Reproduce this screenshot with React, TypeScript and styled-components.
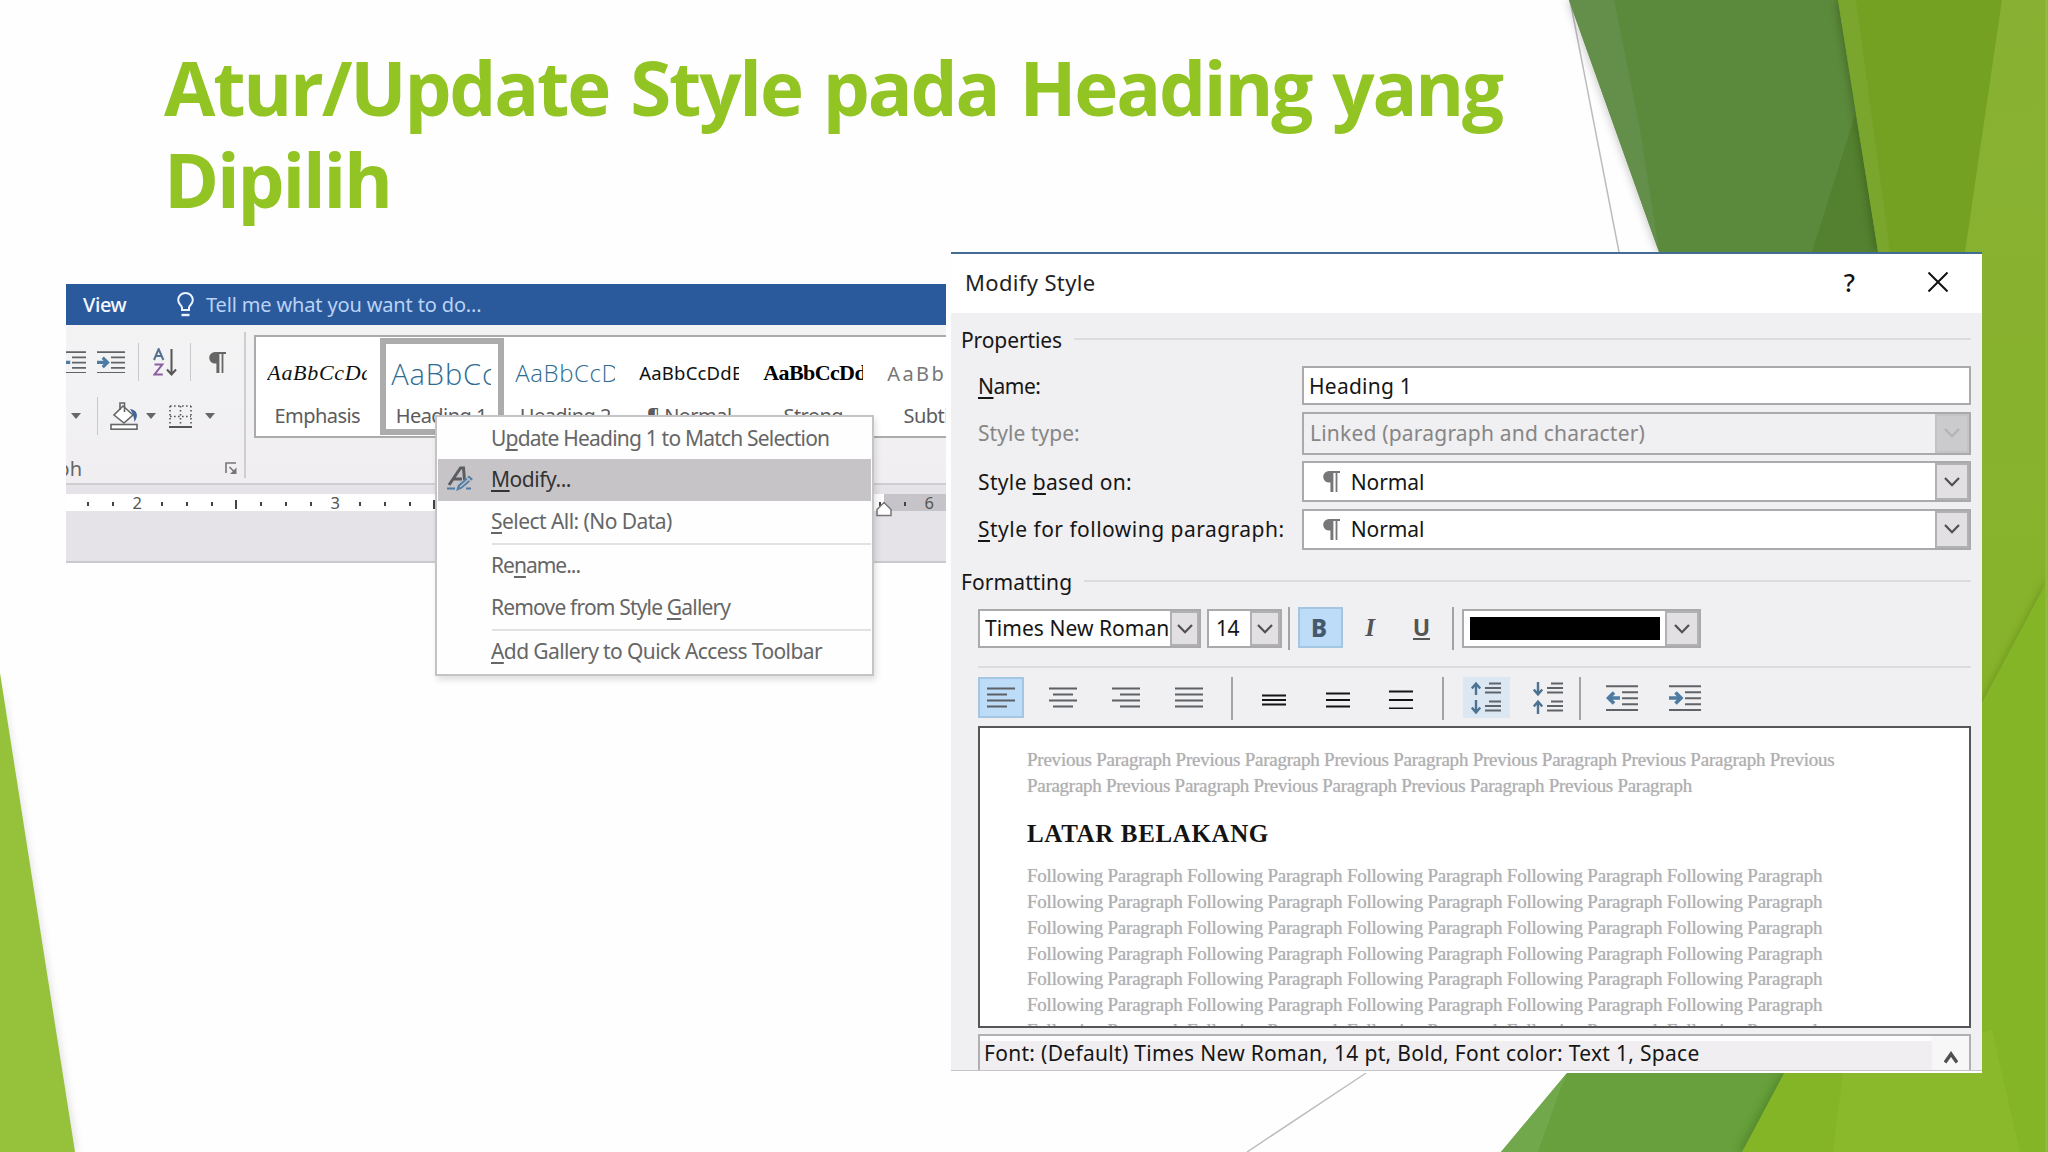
import React from "react";
import styled, { createGlobalStyle, css } from "styled-components";

const sans = `"Noto Sans", "Open Sans", sans-serif`;
const serif = `"Liberation Serif", "Times New Roman", serif`;

const GlobalStyle = createGlobalStyle`
  *, *::before, *::after { box-sizing: border-box; }
  body { margin: 0; background: #fefefe; font-family: ${sans}; }
  svg { display: block; flex: none; }
  u { text-decoration-thickness: 2px; text-underline-offset: 3px; text-decoration-skip-ink: none; }
`;

/* ---------- slide ---------- */

const Slide = styled.main`
  position: relative;
  width: 2048px;
  height: 1152px;
  overflow: hidden;
  display: flex;
  flex-direction: column;
`;

const Backdrop = styled.svg`
  position: absolute;
  inset: 0;
`;

const SlideTitle = styled.h1`
  position: relative;
  margin: 0;
  height: 252px;
  padding: 41px 0 0 164px;
  width: 1560px;
  font: 700 74.5px/92px "Open Sans", sans-serif;
  letter-spacing: -2.2px;
  word-spacing: 4px;
  color: #92c424;
`;

const Figures = styled.div`
  position: relative;
  display: flex;
  align-items: flex-start;
  padding-left: 66px;
  gap: 5px;
`;

const Text = styled.span<{ $ls?: number }>`
  letter-spacing: ${(p) => p.$ls ?? 0}px;
  white-space: pre;
`;

/* ---------- ribbon ---------- */

const WordWindow = styled.section`
  position: relative;
  width: 880px;
  height: 279px;
  margin-top: 32px;
  display: flex;
  flex-direction: column;
  background: #e5e3e7;
  border-bottom: 2px solid #cbc9cc;
`;

const TabBar = styled.div`
  height: 41px;
  flex: none;
  display: flex;
  align-items: center;
  padding: 0 0 1px 17px;
  background: #2a5a9c;
  color: #b9d3f5;
  font-size: 20px;
`;

const ActiveTab = styled.span`
  width: 94px;
  color: #f4f9ff;
  font-weight: 500;
  letter-spacing: -0.4px;
`;

const TellMe = styled.span`
  margin-left: 12px;
  letter-spacing: -0.15px;
`;

const Ribbon = styled.div`
  height: 160px;
  flex: none;
  display: flex;
  overflow: hidden;
  background: linear-gradient(#f3f3f4, #f0eef1);
  border-bottom: 2px solid #cfcdd0;
`;

const ParagraphGroup = styled.div`
  width: 180px;
  height: 146px;
  margin-top: 7px;
  display: flex;
  flex-direction: column;
  border-right: 2px solid #cfcdd1;
`;

const IconRow = styled.div<{ $top: number }>`
  height: 38px;
  margin-top: ${(p) => p.$top}px;
  display: flex;
  align-items: center;
`;

const Slot = styled.span<{ $ml: number }>`
  margin-left: ${(p) => p.$ml}px;
  display: flex;
`;

const GroupDivider = styled.span<{ $ml: number }>`
  width: 1px;
  height: 38px;
  margin-left: ${(p) => p.$ml}px;
  background: #c9c8cb;
`;

const GroupFooter = styled.div`
  display: flex;
  align-items: center;
  justify-content: space-between;
  height: 28px;
  margin-top: 23px;
  padding-right: 7px;
  overflow: hidden;
  color: #666;
  font-size: 20px;
`;

const GroupName = styled.span`
  width: 16px;
  display: flex;
  justify-content: flex-end;
  overflow: hidden;
`;

const Gallery = styled.div`
  flex: 1;
  min-width: 0;
  height: 103px;
  margin: 10px 0 0 8px;
  display: flex;
  overflow: hidden;
  background: #fff;
  border: 2px solid #ababab;
  border-right: 0;
`;

const StyleCell = styled.div<{ $selected?: boolean }>`
  width: 124px;
  height: 97px;
  margin-top: 1px;
  flex: none;
  padding: 12px 1.5px 0 0;
  display: flex;
  flex-direction: column;
  align-items: center;
  gap: 8px;
  ${(p) => p.$selected && css`box-shadow: inset 0 0 0 6px #acacac;`}
`;

type Face = "emphasis" | "heading1" | "heading2" | "normal" | "strong" | "subtitle";

const faces = {
  emphasis: css`font: italic 400 22px/45px ${serif}; letter-spacing: 0.7px; color: #111;`,
  heading1: css`font: 300 29px/47px "Open Sans", sans-serif; letter-spacing: 0.9px; color: #2f6c92;`,
  heading2: css`font: 300 24px/45px "Open Sans", sans-serif; letter-spacing: 0.6px; color: #2f6c92;`,
  normal: css`font: 400 18.5px/45px ${sans}; letter-spacing: 0.2px; color: #111;`,
  strong: css`font: 700 22px/45px ${serif}; letter-spacing: -0.6px; color: #000;`,
  subtitle: css`font: 400 20px/47px ${sans}; letter-spacing: 2.4px; color: #777;`,
};

const Preview = styled.div<{ $face: Face }>`
  width: 100px;
  height: 44px;
  overflow: hidden;
  white-space: nowrap;
  ${(p) => faces[p.$face]}
`;

const StyleName = styled.div`
  height: 28px;
  font-size: 20px;
  line-height: 28px;
  letter-spacing: -0.55px;
  color: #5c5c5c;
  white-space: nowrap;
`;

const Ruler = styled.div`
  height: 17px;
  flex: none;
  margin-top: 9px;
  display: flex;
  padding-left: 9.4px;
  overflow: hidden;
  background: linear-gradient(90deg, #fff 0 818px, #c6c4c8 818px);
`;

const RulerCell = styled.span`
  width: 24.75px;
  flex: none;
  display: flex;
  align-items: center;
  justify-content: center;
  font-size: 16.5px;
  line-height: 17px;
  color: #555;
`;

const Tick = styled.i<{ $tall?: boolean }>`
  width: 2px;
  height: ${(p) => (p.$tall ? 9 : 4)}px;
  margin-top: ${(p) => (p.$tall ? 3 : 2)}px;
  background: #444;
`;

const IndentMarker = styled.svg`
  position: absolute;
  left: 810px;
  top: 217px;
`;

/* ---------- context menu ---------- */

const Menu = styled.div`
  position: absolute;
  left: 369px;
  top: 131px;
  width: 439px;
  height: 261px;
  padding: 1px;
  background: #fefefe;
  border: 2px solid #c4c4c6;
  box-shadow: 2px 4px 6px rgba(0, 0, 0, 0.12);
`;

const MenuItem = styled.div<{ $active?: boolean }>`
  height: 41.3px;
  display: flex;
  align-items: center;
  padding-bottom: 1px;
  font-size: 21px;
  color: ${(p) => (p.$active ? "#333" : "#666")};
  background: ${(p) => (p.$active ? "#c6c4c7" : "transparent")};
`;

const MenuIcon = styled.span`
  width: 53px;
  padding-left: 9px;
  flex: none;
`;

const MenuRule = styled.div`
  height: 2px;
  margin: 0.7px 0 0.7px 54px;
  background: #e2e2e2;
`;

/* ---------- dialog ---------- */

const DialogBox = styled.section`
  width: 1031px;
  height: 821px;
  display: flex;
  flex-direction: column;
  background: #f0eff1;
  border-top: 2px solid #426c93;
  border-bottom: 2px solid #fff;
`;

const DialogTitle = styled.header`
  height: 59px;
  flex: none;
  display: flex;
  align-items: center;
  padding: 0 34px 4px 14px;
  background: #fff;
  color: #222;
  font-size: 22px;
`;

const HelpMark = styled.span`
  margin-left: auto;
  margin-right: 73px;
  font-size: 25px;
  font-weight: 500;
  color: #111;
`;

const DialogBody = styled.div`
  flex: 1;
  padding: 12px 11px 0 27px;
  display: flex;
  flex-direction: column;
  border-bottom: 1px solid #c4c4c6;
`;

const SectionHead = styled.div<{ $top?: number }>`
  display: flex;
  align-items: center;
  gap: 12px;
  height: 29px;
  flex: none;
  margin: ${(p) => p.$top ?? 0}px 0 0 -17px;
  font-size: 21px;
  color: #161616;

  &::after {
    content: "";
    flex: 1;
    height: 2px;
    margin-bottom: 1px;
    background: #dcdbdd;
  }
`;

const Fields = styled.div`
  margin-top: 12px;
  display: grid;
  grid-template-columns: 324px 1fr;
  grid-template-rows: 39px 43px 41px 41px;
  row-gap: 6.5px;
  align-items: center;
  font-size: 21px;
`;

const Label = styled.label<{ $muted?: boolean }>`
  color: ${(p) => (p.$muted ? "#868686" : "#161616")};
  white-space: pre;
`;

const Field = styled.div<{ $muted?: boolean; $pad?: number; $width?: number }>`
  width: ${(p) => (p.$width ? `${p.$width}px` : "100%")};
  height: 100%;
  display: flex;
  align-items: center;
  padding-left: ${(p) => p.$pad ?? 5}px;
  border: 2px solid #aaa9ac;
  background: ${(p) => (p.$muted ? "#f0eff1" : "#fff")};
  color: ${(p) => (p.$muted ? "#868686" : "#161616")};
  white-space: nowrap;
  overflow: hidden;
`;

const DropButton = styled.span<{ $muted?: boolean; $wide?: number }>`
  width: ${(p) => p.$wide ?? 34}px;
  flex: none;
  align-self: stretch;
  margin-left: auto;
  display: flex;
  align-items: center;
  justify-content: center;
  background: ${(p) => (p.$muted ? "#cbcacc" : "#e2e0e3")};
  border: 2px solid ${(p) => (p.$muted ? "#c3c2c4" : "#b1b0b3")};
`;

const Bar = styled.div<{ $top: number }>`
  height: 43px;
  flex: none;
  margin-top: ${(p) => p.$top}px;
  display: flex;
  font-size: 21px;
`;

const Combo = styled.div<{ $ml?: number; $w: number }>`
  width: ${(p) => p.$w}px;
  height: 39px;
  margin: 2px 0 0 ${(p) => p.$ml ?? 0}px;
  line-height: 28px;

  ${Text} { margin-bottom: 2px; }
`;

const Divider = styled.span<{ $ml: number }>`
  width: 2px;
  height: 43px;
  margin-left: ${(p) => p.$ml}px;
  background: #a3a2a5;
`;

const ToolButton = styled.span<{ $ml?: number; $tone?: "on" | "hover"; $w?: number }>`
  width: ${(p) => p.$w ?? 46}px;
  height: 41px;
  margin-left: ${(p) => p.$ml ?? 0}px;
  display: flex;
  align-items: center;
  justify-content: center;
  color: #555;
  ${(p) => p.$tone === "on" && css`background: #bddcf7; border: 2px solid #a3c6e2;`}
  ${(p) => p.$tone === "hover" && css`background: #dbe8f4;`}
`;

const Glyph = styled.span<{ $kind: "b" | "i" | "u" }>`
  line-height: 28px;
  ${(p) => p.$kind === "b" && css`font: 800 24px/28px ${sans}; color: #45586c; margin-right: 3px;`}
  ${(p) => p.$kind === "i" && css`font: italic 700 25px/28px ${serif}; margin-right: 1px;`}
  ${(p) => p.$kind === "u" && css`font: 700 23px/22px ${sans}; border-bottom: 2px solid #555; margin: 1px 2px 0 0;`}
`;

const Swatch = styled.span`
  width: 190px;
  height: 23px;
  background: #000;
`;

const Rule = styled.div`
  height: 2px;
  flex: none;
  margin-top: 16px;
  background: #dcdbdd;
`;

const PreviewPane = styled.div`
  height: 302px;
  flex: none;
  margin-top: 6px;
  padding: 19px 0 0 47px;
  overflow: hidden;
  background: #fff;
  border: 2px solid #555659;
  font: 400 19px/25.7px ${serif};
  color: #b0afb1;
  white-space: pre;
`;

const SampleLine = styled.div<{ $ls?: number }>`
  letter-spacing: ${(p) => p.$ls ?? -0.235}px;
  text-shadow: 0 0 1px #c8c7c9;
`;

const SampleHeading = styled.div`
  height: 47px;
  margin: 13px 0 5px;
  font-size: 25px;
  font-weight: 700;
  line-height: 45px;
  letter-spacing: 0.63px;
  color: #141414;
`;

const Description = styled.div`
  flex: 1;
  margin-top: 6px;
  display: flex;
  align-items: center;
  padding-left: 4px;
  border: 2px solid #b0afb2;
  border-bottom: 0;
  background: linear-gradient(#fcfcfc 0 5px, #f0eef0 5px);
  font-size: 21px;
  color: #161616;
`;

const ScrollUp = styled.span`
  width: 37px;
  align-self: stretch;
  margin-left: auto;
  display: flex;
  align-items: center;
  justify-content: center;
  padding-top: 8px;
  background: #f8f7f8;
`;

/* ---------- icons ---------- */

const IndentIcon = ({ dir, w = 32 }: { dir: "left" | "right"; w?: number }) => (
  <svg width={w} height={(w * 26) / 32} viewBox="0 0 32 26" fill="none" stroke="#606468" strokeWidth="2">
    <path d="M0 1.300H32M16 7.300H32M16 13.300H32M16 19.300H32M0 25H32" />
    <path
      d={dir === "left" ? "M14 13H3M8 7.500L2.500 13L8 18.500" : "M0 13H11M6.500 7.500L12 13L6.500 18.500"}
      stroke="#4d7ba3"
      strokeWidth="3.600"
    />
  </svg>
);

const Caret = () => (
  <svg width="10" height="6" viewBox="0 0 10 6"><path d="M0 0H10L5 6Z" fill="#666" /></svg>
);

const Pilcrow = ({ w = 17, h = 21, color = "#77777a" }: { w?: number; h?: number; color?: string }) => (
  <svg width={w} height={h} viewBox="0 0 17 21">
    <path d="M17 0H6A5.700 5.700 0 0 0 6 11.600H7.400V21H10.400V2H12.600V21H14.400V2H17Z" fill={color} />
  </svg>
);

const SortIcon = () => (
  <svg width="24" height="29" viewBox="0 0 24 29" fill="none" strokeWidth="2">
    <path d="M1 12L5.600 1L10.400 12M2.800 8H8.600" stroke="#56708f" />
    <path d="M1.500 16.500H9.300L1.500 26.500H9.800" stroke="#8a5fa0" />
    <path d="M18.500 1V26M14 21.500L18.500 26.500L23 21.500" stroke="#555" />
  </svg>
);

const BucketIcon = () => (
  <svg width="28" height="28" viewBox="0 0 28 28" fill="none" stroke="#666" strokeWidth="1.600">
    <path d="M13 4L23 13L14 21L4 13Z" fill="#fff" />
    <path d="M10 8V1H14.500V10" />
    <path d="M20 7C27 8 29 13 24.500 20C24 15 23 11 20 7Z" fill="#41649b" stroke="none" />
    <rect x="1" y="22.500" width="26" height="4.700" fill="#fff" />
  </svg>
);

const BordersIcon = () => (
  <svg width="23" height="23" viewBox="0 0 23 23" fill="none" stroke="#555" strokeWidth="1.600">
    <path d="M1 1H22M1 11.500H22M1 1V20M11.500 1V20M22 1V20" strokeDasharray="1.600 2.400" />
    <path d="M0 22H23" strokeWidth="2" />
  </svg>
);

const LauncherIcon = () => (
  <svg width="12" height="13" viewBox="0 0 12 13" fill="none" stroke="#777" strokeWidth="1.600">
    <path d="M1 11V1H11M4.500 5L10 10.500" />
    <path d="M11.500 5.500V12H5Z" fill="#777" stroke="none" />
  </svg>
);

const BulbIcon = () => (
  <svg width="17" height="25" viewBox="0 0 17 25" fill="none" stroke="#eaf3ff" strokeWidth="2">
    <path d="M5 18V15.500C4 13 1.200 11.500 1.200 8A7.300 7 0 0 1 15.800 8C15.800 11.500 13 13 12 15.500V18Z" />
    <path d="M4.500 23H12.500" strokeWidth="2.400" />
  </svg>
);

const ModifyIcon = () => (
  <svg width="27" height="26" viewBox="0 0 27 26" fill="none">
    <path d="M2 19L13.500 2H16.500L17.500 14M7 13H15" stroke="#5b5d61" strokeWidth="3" />
    <path d="M0 22.500H8M19 22.500H24" stroke="#4f7ba5" strokeWidth="1.800" />
    <path d="M9 25L11 19L22 9.500L26 13L15 22.500Z" fill="#5480a8" />
    <path d="M13 21L22.500 12.500M19 11L24 15.500" stroke="#c6c4c7" strokeWidth="1.200" />
  </svg>
);

const Chevron = ({ color = "#505053" }: { color?: string }) => (
  <svg width="16" height="10" viewBox="0 0 16 10" fill="none" stroke={color} strokeWidth="2.200">
    <path d="M1 1L8 8.200L15 1" />
  </svg>
);

const CloseIcon = () => (
  <svg width="20" height="20" viewBox="0 0 20 20" stroke="#111" strokeWidth="2">
    <path d="M0.500 0.500L19.500 19.500M19.500 0.500L0.500 19.500" />
  </svg>
);

const alignShapes = {
  left: "M0 1.500H28M0 7.500H20M0 13.500H28M0 19.500H20",
  center: "M0 1.500H28M4 7.500H24M0 13.500H28M4 19.500H24",
  right: "M0 1.500H28M8 7.500H28M0 13.500H28M8 19.500H28",
  justify: "M0 1.500H28M0 7.500H28M0 13.500H28M0 19.500H28",
};

const AlignIcon = ({ kind }: { kind: keyof typeof alignShapes }) => (
  <svg width="28" height="21" viewBox="0 0 28 21" stroke="#5d6165" strokeWidth="2"><path d={alignShapes[kind]} /></svg>
);

const LineSpacingIcon = ({ gap }: { gap: number }) => (
  <svg width="24" height="22" viewBox="0 0 24 22" stroke="#151515" strokeWidth="2.200">
    <path d={`M0 ${13 - gap}H24M0 13H24M0 ${13 + gap}H24`} />
  </svg>
);

const SpaceIcon = ({ expand }: { expand?: boolean }) => (
  <svg width="31" height="33" viewBox="0 0 31 33" fill="none" stroke="#606468" strokeWidth="2">
    <path d="M18 2.500H30M14 7H30M14 11.500H30M18 20.500H30M14 25H30M14 29.500H30" />
    <g stroke="#4d7391" strokeWidth="2.400">
      {expand ? (
        <path d="M5 14V3M0.800 7.500L5 2.500L9.200 7.500M5 19V31M0.800 26.500L5 31.500L9.200 26.500" />
      ) : (
        <path d="M5 1V13M0.800 8.500L5 13.500L9.200 8.500M5 33V21M0.800 25.500L5 20.500L9.200 25.500" />
      )}
    </g>
  </svg>
);

const UpIcon = () => (
  <svg width="14" height="13" viewBox="0 0 14 13" fill="none" stroke="#505053" strokeWidth="3.400">
    <path d="M1 11.500L7 3L13 11.500" />
  </svg>
);

/* ---------- content ---------- */

const styleCells: { name: string; sample: string; face: Face; selected?: boolean }[] = [
  { name: "Emphasis", sample: "AaBbCcDd", face: "emphasis" },
  { name: "Heading 1", sample: "AaBbCc", face: "heading1", selected: true },
  { name: "Heading 2", sample: "AaBbCcD", face: "heading2" },
  { name: "¶ Normal", sample: "AaBbCcDdE", face: "normal" },
  { name: "Strong", sample: "AaBbCcDd", face: "strong" },
  { name: "Subtitle", sample: "AaBbCcD", face: "subtitle" },
];

const rulerCells = Array.from({ length: 36 }, (_, i) => i);
const previous = "Previous Paragraph ";
const following = "Following Paragraph ";

const Background = () => (
  <Backdrop width="2048" height="1152" viewBox="0 0 2048 1152">
    <defs>
      <filter id="soft" x="-20%" y="-20%" width="140%" height="140%"><feGaussianBlur stdDeviation="4" /></filter>
      <linearGradient id="rightSide" x1="0" y1="0" x2="0" y2="1">
        <stop offset="0" stopColor="#88b133" />
        <stop offset="1" stopColor="#86b32a" />
      </linearGradient>
    </defs>
    <path d="M1570 0L1619 252M1366 1073L1247 1152" stroke="#bdbdbd" strokeWidth="1.500" />
    <path d="M1567 0L1657 252H1700V0Z" fill="#000" opacity=".2" filter="url(#soft)" />
    <path d="M1569 0L1659 252H1900V0Z" fill="#5c8a3d" />
    <path d="M1569 0L1659 252L1640 130L1614 0Z" fill="#648f4b" />
    <path d="M1855 115L1812 252H1880Z" fill="#548130" />
    <path d="M1836 0L1876 252H1920V0Z" fill="#20400a" opacity=".4" filter="url(#soft)" />
    <path d="M1838 0L1878 252H2048V0Z" fill="#74a122" />
    <path d="M1838 0L1878 252H1890L1856 0Z" fill="#7aa62d" />
    <path d="M2002 0L1965 252V720H2048V0Z" fill="url(#rightSide)" />
    <path d="M2048 579L1742 1152H2048Z" fill="#4d7012" opacity=".55" filter="url(#soft)" />
    <path d="M1567 1073L1501 1152H1760L1790 1073Z" fill="#67a03c" />
    <path d="M1567 1073L1501 1152H1538L1560 1090Z" fill="#71a84c" />
    <path d="M1781 1073L1738 1152H1760L1800 1073Z" fill="#3f6f1c" opacity=".5" filter="url(#soft)" />
    <path d="M2048 579L1742 1152H2048Z" fill="#84b526" />
    <path d="M1843 1073L1833 1152H2020L1992 1030Z" fill="#8ab92c" />
    <path d="M2046.500 0V1152" stroke="#93bd3c" strokeWidth="2" />
    <path d="M0 672L77 1152H0Z" fill="#000" opacity=".12" filter="url(#soft)" />
    <path d="M0 673L75 1152H0Z" fill="#95c13b" />
  </Backdrop>
);

const ContextMenu = () => (
  <Menu>
    <MenuItem><MenuIcon /><Text $ls={-0.8}>U<u>p</u>date Heading 1 to Match Selection</Text></MenuItem>
    <MenuItem $active><MenuIcon><ModifyIcon /></MenuIcon><Text $ls={-0.45}><u>M</u>odify...</Text></MenuItem>
    <MenuItem><MenuIcon /><Text $ls={-0.55}><u>S</u>elect All: (No Data)</Text></MenuItem>
    <MenuRule />
    <MenuItem><MenuIcon /><Text $ls={-1}>Re<u>n</u>ame...</Text></MenuItem>
    <MenuItem><MenuIcon /><Text $ls={-0.82}>Remove from Style <u>G</u>allery</Text></MenuItem>
    <MenuRule />
    <MenuItem><MenuIcon /><Text $ls={-0.6}><u>A</u>dd Gallery to Quick Access Toolbar</Text></MenuItem>
  </Menu>
);

const WordRibbon = () => (
  <WordWindow>
    <TabBar>
      <ActiveTab>View</ActiveTab>
      <BulbIcon />
      <TellMe>Tell me what you want to do...</TellMe>
    </TabBar>
    <Ribbon>
      <ParagraphGroup>
        <IconRow $top={11}>
          <Slot $ml={-8}><IndentIcon dir="left" w={28} /></Slot>
          <Slot $ml={11}><IndentIcon dir="right" w={28} /></Slot>
          <GroupDivider $ml={13} />
          <Slot $ml={14}><SortIcon /></Slot>
          <GroupDivider $ml={13} />
          <Slot $ml={18}><Pilcrow color="#666" /></Slot>
        </IconRow>
        <IconRow $top={16}>
          <Slot $ml={5}><Caret /></Slot>
          <GroupDivider $ml={16} />
          <Slot $ml={12}><BucketIcon /></Slot>
          <Slot $ml={8}><Caret /></Slot>
          <Slot $ml={13}><BordersIcon /></Slot>
          <Slot $ml={13}><Caret /></Slot>
        </IconRow>
        <GroupFooter>
          <GroupName>Paragraph</GroupName>
          <LauncherIcon />
        </GroupFooter>
      </ParagraphGroup>
      <Gallery>
        {styleCells.map((c) => (
          <StyleCell key={c.name} $selected={c.selected}>
            <Preview $face={c.face}>{c.sample}</Preview>
            <StyleName>{c.name}</StyleName>
          </StyleCell>
        ))}
      </Gallery>
    </Ribbon>
    <Ruler>
      {rulerCells.map((i) => (
        <RulerCell key={i}>
          {i % 8 === 2 ? 2 + (i - 2) / 8 : <Tick $tall={i % 8 === 6} />}
        </RulerCell>
      ))}
    </Ruler>
    <IndentMarker width="16" height="16" viewBox="0 0 16 16">
      <path d="M1 14.500V8.500L8 1.500L15 8.500V14.500Z" fill="#fff" stroke="#777" strokeWidth="1.500" />
    </IndentMarker>
    <ContextMenu />
  </WordWindow>
);

const ModifyStyleDialog = () => (
  <DialogBox>
    <DialogTitle>
      <Text $ls={0.35}>Modify Style</Text>
      <HelpMark>?</HelpMark>
      <CloseIcon />
    </DialogTitle>
    <DialogBody>
      <SectionHead><Text $ls={-0.1}>Properties</Text></SectionHead>
      <Fields>
        <Label><Text $ls={-0.5}><u>N</u>ame:</Text></Label>
        <Field><Text $ls={0.25}>Heading 1</Text></Field>
        <Label $muted><Text $ls={0.05}>Style type:</Text></Label>
        <Field $muted $pad={6}>
          <Text $ls={0.2}>Linked (paragraph and character)</Text>
          <DropButton $muted><Chevron color="#b3b2b5" /></DropButton>
        </Field>
        <Label><Text $ls={0.35}>Style <u>b</u>ased on:</Text></Label>
        <Field $pad={19}>
          <Pilcrow />
          <Text $ls={-0.1}>{"  Normal"}</Text>
          <DropButton><Chevron /></DropButton>
        </Field>
        <Label><Text $ls={0.48}><u>S</u>tyle for following paragraph:</Text></Label>
        <Field $pad={19}>
          <Pilcrow />
          <Text $ls={-0.1}>{"  Normal"}</Text>
          <DropButton><Chevron /></DropButton>
        </Field>
      </Fields>
      <SectionHead $top={17.5}><Text $ls={0.1}>Formatting</Text></SectionHead>
      <Bar $top={11}>
        <Combo $w={223}>
          <Field $pad={5}><Text $ls={0.05}>Times New Roman</Text><DropButton $wide={29}><Chevron /></DropButton></Field>
        </Combo>
        <Combo $w={75} $ml={6}>
          <Field $pad={7}><Text $ls={-0.6}>14</Text><DropButton $wide={30}><Chevron /></DropButton></Field>
        </Combo>
        <Divider $ml={6} />
        <ToolButton $ml={8} $w={45} $tone="on"><Glyph $kind="b">B</Glyph></ToolButton>
        <ToolButton $ml={5} $w={45}><Glyph $kind="i">I</Glyph></ToolButton>
        <ToolButton $ml={7} $w={45}><Glyph $kind="u">U</Glyph></ToolButton>
        <Divider $ml={7} />
        <Combo $w={239} $ml={8}>
          <Field $pad={6}><Swatch /><DropButton $wide={34}><Chevron /></DropButton></Field>
        </Combo>
      </Bar>
      <Rule />
      <Bar $top={9}>
        <ToolButton $tone="on"><AlignIcon kind="left" /></ToolButton>
        <ToolButton $ml={16}><AlignIcon kind="center" /></ToolButton>
        <ToolButton $ml={17}><AlignIcon kind="right" /></ToolButton>
        <ToolButton $ml={17}><AlignIcon kind="justify" /></ToolButton>
        <Divider $ml={19} />
        <ToolButton $ml={18}><LineSpacingIcon gap={4.5} /></ToolButton>
        <ToolButton $ml={18}><LineSpacingIcon gap={6.5} /></ToolButton>
        <ToolButton $ml={17}><LineSpacingIcon gap={8.5} /></ToolButton>
        <Divider $ml={18} />
        <ToolButton $ml={19} $w={47} $tone="hover"><SpaceIcon expand /></ToolButton>
        <ToolButton $ml={15}><SpaceIcon /></ToolButton>
        <Divider $ml={8} />
        <ToolButton $ml={18}><IndentIcon dir="left" /></ToolButton>
        <ToolButton $ml={17}><IndentIcon dir="right" /></ToolButton>
      </Bar>
      <PreviewPane>
        <SampleLine>{previous.repeat(5) + "Previous"}</SampleLine>
        <SampleLine $ls={-0.285}>{"Paragraph " + previous.repeat(4).trimEnd()}</SampleLine>
        <SampleHeading>LATAR BELAKANG</SampleHeading>
        {[0, 1, 2, 3, 4, 5, 6].map((i) => (
          <SampleLine key={i}>{following.repeat(5).trimEnd()}</SampleLine>
        ))}
      </PreviewPane>
      <Description>
        <Text $ls={0.3}>Font: (Default) Times New Roman, 14 pt, Bold, Font color: Text 1, Space</Text>
        <ScrollUp><UpIcon /></ScrollUp>
      </Description>
    </DialogBody>
  </DialogBox>
);

export default function App() {
  return (
    <>
      <GlobalStyle />
      <Slide>
        <Background />
        <SlideTitle>Atur/Update Style pada Heading yang Dipilih</SlideTitle>
        <Figures>
          <WordRibbon />
          <ModifyStyleDialog />
        </Figures>
      </Slide>
    </>
  );
}
